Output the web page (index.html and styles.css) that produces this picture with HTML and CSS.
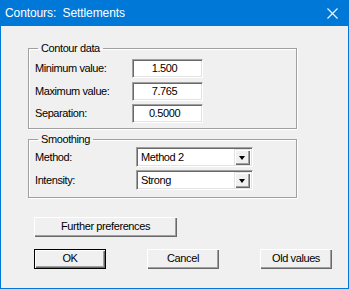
FILE: index.html
```html
<!DOCTYPE html>
<html>
<head>
<meta charset="utf-8">
<link rel="stylesheet" href="styles.css">
</head>
<body>
<div class="window">
  <div class="titlebar">
    <span class="title">Contours:&nbsp; Settlements</span>
    <svg class="close" width="11" height="11" viewBox="0 0 11 11"><path d="M0.5 0.5 L10.5 10.5 M10.5 0.5 L0.5 10.5" stroke="#fff" stroke-width="1.1" fill="none"/></svg>
  </div>
  <div class="content">
    <fieldset class="group g1">
      <legend>Contour data</legend>
      <div class="rows rows1">
        <label>Minimum value:</label><div class="edit">1.500</div>
        <label>Maximum value:</label><div class="edit">7.765</div>
        <label>Separation:</label><div class="edit">0.5000</div>
      </div>
    </fieldset>
    <fieldset class="group g2">
      <legend>Smoothing</legend>
      <div class="rows rows2">
        <label>Method:</label><div class="combo"><span class="ctext">Method 2</span><span class="cbtn"><span class="arrow"></span></span></div>
        <label>Intensity:</label><div class="combo"><span class="ctext">Strong</span><span class="cbtn"><span class="arrow"></span></span></div>
      </div>
    </fieldset>
    <div class="btnrow first">
      <div class="btn wide">Further preferences</div>
    </div>
    <div class="btnrow last">
      <div class="btn default">OK</div>
      <div class="btn">Cancel</div>
      <div class="btn">Old values</div>
    </div>
  </div>
</div>
</body>
</html>
```

FILE: styles.css
```css
html, body {
  margin: 0;
  padding: 0;
  background: #f0f0f0;
}
.window {
  width: 349px;
  height: 289px;
  box-sizing: border-box;
  border: 1px solid #0078d7;
  border-top: none;
  background: #f0f0f0;
  display: flex;
  flex-direction: column;
  font-family: "Liberation Sans", Arial, sans-serif;
  font-size: 11px;
  letter-spacing: -0.4px;
  color: #000;
}
.titlebar {
  height: 26px;
  margin: 0 -1px;
  background: #0078d7;
  display: flex;
  align-items: center;
  justify-content: space-between;
  padding: 0 11px 0 5px;
  flex-shrink: 0;
}
.title {
  font-family: "Liberation Sans", Arial, sans-serif;
  font-size: 12px;
  letter-spacing: -0.1px;
  color: #fff;
  line-height: 16px;
}
.close {
  display: block;
}
.content {
  padding: 16px 0 0 27px;
  display: flex;
  flex-direction: column;
}
.group {
  width: 269px;
  box-sizing: border-box;
  margin: 0;
  border: 1px solid #a0a0a0;
  box-shadow: inset 1px 1px 0 #fff, 1px 1px 0 #fff;
  min-width: 0;
}
.group legend {
  padding: 0 3px;
  margin-left: 3px;
  line-height: 13px;
}
.g1 {
  padding: 4px 6px 5px 6px;
}
.g2 {
  margin-top: 4px;
  padding: 1px 6px 7px 6px;
}
.rows {
  display: grid;
  align-items: center;
}
.rows1 {
  grid-template-columns: 97px 71px;
  grid-auto-rows: 19px;
  row-gap: 3.5px;
}
.rows2 {
  grid-template-columns: 101px 117px;
  grid-auto-rows: 20px;
  row-gap: 3px;
}
.rows label {
  line-height: 13px;
}
.edit, .combo {
  height: 100%;
  box-sizing: border-box;
  background: #fff;
  border-top: 1px solid #a0a0a0;
  border-left: 1px solid #a0a0a0;
  border-right: 1px solid #fff;
  border-bottom: 1px solid #fff;
  box-shadow: inset 1px 1px 0 #696969, inset -1px -1px 0 #e3e3e3;
}
.edit {
  text-align: center;
  padding-right: 6px;
  line-height: 17px;
}
.combo {
  display: flex;
  align-items: center;
  justify-content: space-between;
  padding: 2px 2px 2px 4px;
}
.ctext {
  line-height: 14px;
}
.cbtn {
  width: 16px;
  height: 16px;
  box-sizing: border-box;
  background: #f0f0f0;
  box-shadow: inset 1px 1px 0 #e3e3e3, inset 2px 2px 0 #fff, inset -1px -1px 0 #696969, inset -2px -2px 0 #a0a0a0;
  display: flex;
  align-items: center;
  justify-content: center;
}
.arrow {
  width: 0;
  height: 0;
  border-left: 3.5px solid transparent;
  border-right: 3.5px solid transparent;
  border-top: 4px solid #000;
  margin-top: 1px;
}
.btnrow {
  display: flex;
  padding-left: 6px;
}
.btnrow.first {
  margin-top: 19px;
}
.btnrow.last {
  margin-top: 12px;
  gap: 41px;
}
.btn {
  width: 72px;
  height: 20px;
  box-sizing: border-box;
  background: #f0f0f0;
  box-shadow: inset 1px 1px 0 #fff, inset -1px -1px 0 #696969, inset -2px -2px 0 #a0a0a0;
  text-align: center;
  line-height: 19px;
}
.btn.wide {
  width: 143px;
}
.btn.default {
  border: 1px solid #000;
  line-height: 17px;
}
```
